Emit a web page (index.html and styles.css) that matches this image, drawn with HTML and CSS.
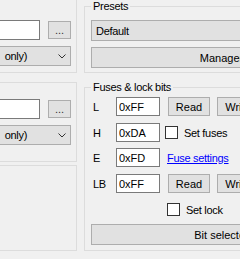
FILE: index.html
```html
<!DOCTYPE html>
<html lang="en">
<head>
  <meta charset="UTF-8" />
  <title>AVRDUDESS</title>
  <link rel="stylesheet" href="styles.css">
</head>
<body>

<div class="form">

  <!-- left column: programmer / file groups -->
  <div class="col-left">
    <fieldset class="group g-one">
      <div class="file-row">
        <input class="textbox path" type="text" value="">
        <button class="btn browse">...</button>
      </div>
      <div class="combo wide"><span>(ISP&nbsp; only)</span><svg class="chev" width="8" height="5" viewBox="0 0 8 5"><path d="M0.5 0.5 L4 4 L7.5 0.5" fill="none" stroke="#333" stroke-width="1"/></svg></div>
    </fieldset>

    <fieldset class="group g-two">
      <div class="file-row">
        <input class="textbox path" type="text" value="">
        <button class="btn browse">...</button>
      </div>
      <div class="combo wide"><span>(ISP&nbsp; only)</span><svg class="chev" width="8" height="5" viewBox="0 0 8 5"><path d="M0.5 0.5 L4 4 L7.5 0.5" fill="none" stroke="#333" stroke-width="1"/></svg></div>
    </fieldset>

    <fieldset class="group g-three"></fieldset>
  </div>

  <!-- right column: presets + fuses -->
  <div class="col-right">
    <fieldset class="group presets">
      <legend>Presets</legend>
      <div class="combo full"><span>Default</span></div>
      <button class="btn long">Manager</button>
    </fieldset>

    <fieldset class="group fuses">
      <legend>Fuses &amp; lock bits</legend>

      <div class="fuse-row">
        <label class="fuse-name">L</label>
        <input class="textbox fuse" type="text" value="0xFF">
        <button class="btn small first">Read</button>
        <button class="btn small">Write</button>
      </div>

      <div class="fuse-row r-h">
        <label class="fuse-name">H</label>
        <input class="textbox fuse" type="text" value="0xDA">
        <input class="check c-fuses" type="checkbox">
        <span class="check-text">Set fuses</span>
      </div>

      <div class="fuse-row r-e">
        <label class="fuse-name">E</label>
        <input class="textbox fuse" type="text" value="0xFD">
        <a class="link" href="#">Fuse settings</a>
      </div>

      <div class="fuse-row r-lb">
        <label class="fuse-name">LB</label>
        <input class="textbox fuse" type="text" value="0xFF">
        <button class="btn small first">Read</button>
        <button class="btn small">Write</button>
      </div>

      <div class="lock-row">
        <input class="check" type="checkbox">
        <span class="check-text">Set lock</span>
      </div>

      <button class="btn long bits">Bit selector</button>
    </fieldset>
  </div>

</div>

</body>
</html>
```

FILE: styles.css
```css
* {
  box-sizing: border-box;
}

body {
  margin: 0;
  width: 240px;
  height: 259px;
  overflow: hidden;
  background-color: #f0f0f0;
  color: #000;
  font-family: 'Liberation Sans', Arial, sans-serif;
  font-size: 11px;
  letter-spacing: -0.3px;
}

.form {
  display: flex;
  gap: 7px;
  width: 520px;
  margin-left: -33px;
}

/* group boxes */
.group {
  margin: 0;
  border: 1px solid #dcdcdc;
  min-width: 0;
}

.group legend {
  padding: 0 2px;
  line-height: 13px;
}

.col-left {
  width: 110px;
  display: flex;
  flex-direction: column;
  margin-top: -10px;
}

.g-one {
  padding: 29px 5px 6px 6px;
  height: 83px;
}

.g-two {
  margin-top: 9px;
  padding: 16px 5px 0 6px;
  height: 80px;
}

.g-three {
  margin-top: 3px;
  height: 86px;
}

.file-row {
  display: flex;
  align-items: center;
  gap: 8px;
  margin-bottom: 6px;
}

/* controls */
.textbox {
  height: 20px;
  margin: 0;
  padding: 0 2px;
  border: 1px solid #7a7a7a;
  background-color: #fff;
  font: inherit;
  color: #000;
  outline: none;
}

.path {
  width: 66px;
}

.btn {
  margin: 0;
  padding: 0;
  border: 1px solid #adadad;
  background-color: #e1e1e1;
  font: inherit;
  color: #000;
}

.browse {
  width: 23px;
  height: 18px;
  line-height: 12px;
  color: #333;
}

.combo {
  display: flex;
  align-items: center;
  height: 20px;
  padding: 0 4px;
  border: 1px solid #adadad;
  background-color: #e1e1e1;
}

.combo span {
  flex: 1;
  white-space: nowrap;
}

.wide {
  width: 97px;
  padding-right: 4px;
}

.chev {
  flex-shrink: 0;
}

.col-right {
  width: 290px;
  display: flex;
  flex-direction: column;
}

.presets {
  padding: 7px 6px 4px 6px;
  height: 73px;
}

.full {
  width: 262px;
  height: 21px;
}

.long {
  display: block;
  width: 261px;
  height: 21px;
  margin-top: 6px;
  text-align: center;
}

.fuses {
  margin-top: 8px;
  padding: 3px 6px 5px 6px;
  height: 170px;
}

.fuse-row {
  display: flex;
  align-items: center;
  height: 19px;
}

.r-h {
  margin-top: 7px;
}

.r-e {
  margin-top: 6px;
}

.r-lb {
  margin-top: 7px;
}

.fuse-name {
  width: 25px;
  padding-left: 2px;
}

.fuse {
  width: 44px;
  height: 19px;
}

.small {
  width: 42px;
  height: 19px;
  margin-left: 7px;
}

.small.first {
  margin-left: 8px;
}

.check {
  appearance: none;
  width: 13px;
  height: 13px;
  margin: 0;
  border: 1px solid #333;
  background-color: #fff;
}

.c-fuses {
  margin-left: 5px;
}

.check-text {
  margin-left: 6px;
}

.link {
  margin-left: 7px;
  color: #0000ff;
  text-decoration: underline;
}

.lock-row {
  display: flex;
  align-items: center;
  height: 19px;
  margin-top: 7px;
  padding-left: 76px;
}

.bits {
  margin-top: 5px;
}
```
